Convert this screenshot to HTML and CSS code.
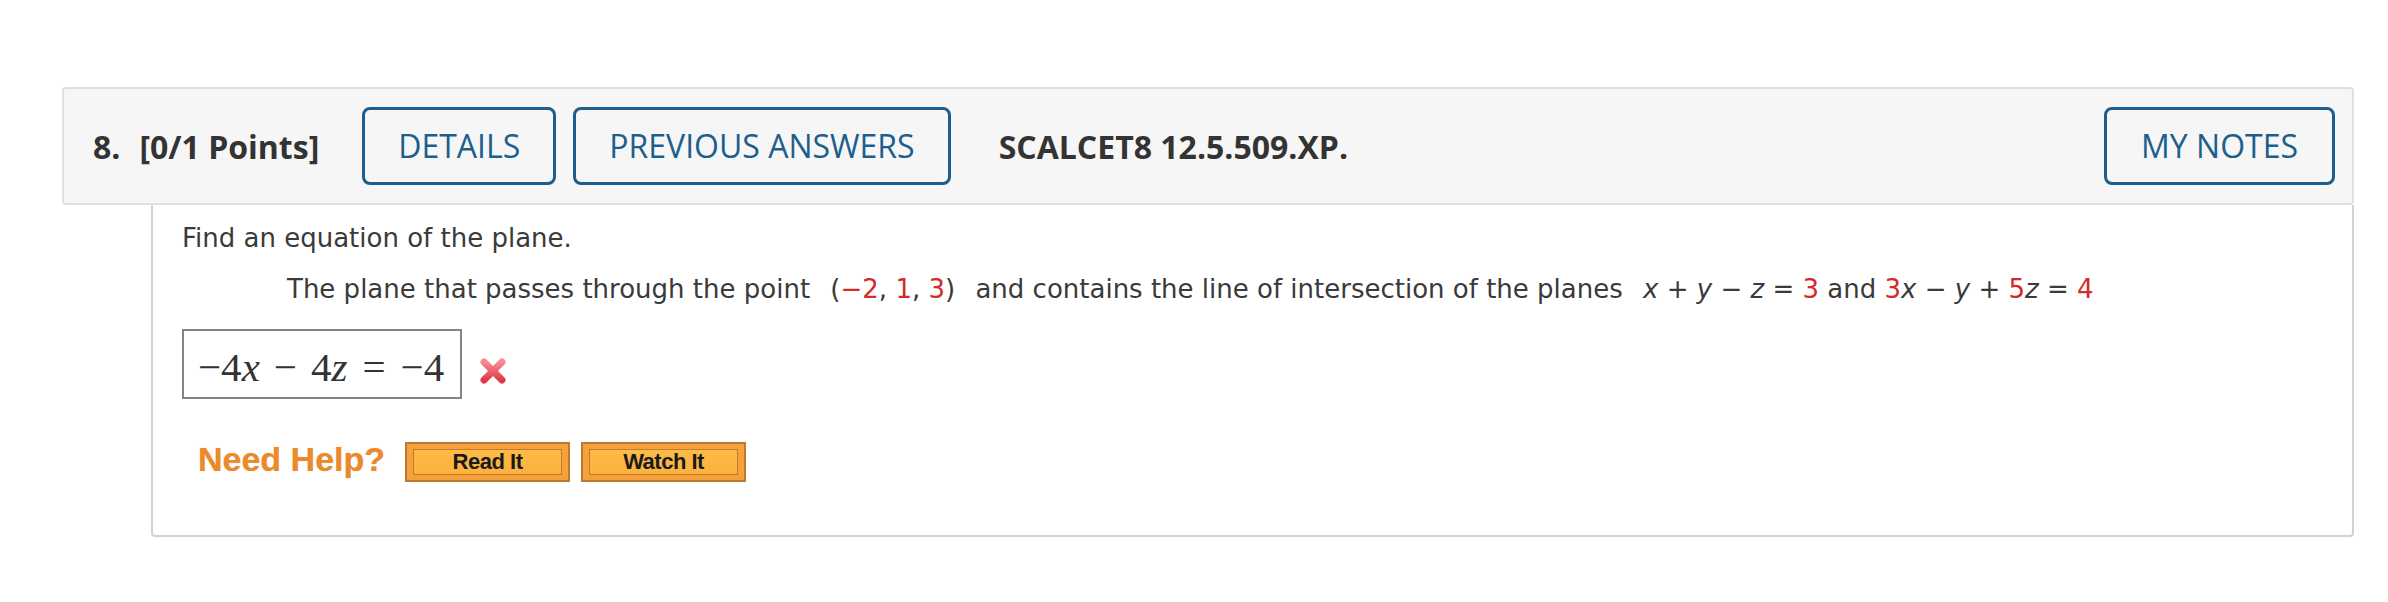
FILE: index.html
```html
<!DOCTYPE html>
<html lang="en">
<head>
<meta charset="utf-8">
<title>Question 8</title>
<link rel="stylesheet" href="styles.css">
</head>
<body>
<div class="question">
  <div class="q-header">
    <span class="q-num">8.</span>
    <span class="q-points">[0/1 Points]</span>
    <button class="q-btn details">DETAILS</button>
    <button class="q-btn">PREVIOUS ANSWERS</button>
    <span class="q-code">SCALCET8 12.5.509.XP.</span>
    <button class="q-btn notes">MY NOTES</button>
  </div>
  <div class="q-body">
    <p class="prompt">Find an equation of the plane.</p>
    <p class="statement">The plane that passes through the point <span class="gap"></span>(<span class="red">−2</span>, <span class="red">1</span>, <span class="red">3</span>)<span class="gap"></span> and contains the line of intersection of the planes <span class="gap"></span><i>x</i> + <i>y</i> − <i>z</i> = <span class="red">3</span> and <span class="red">3</span><i>x</i> − <i>y</i> + <span class="red">5</span><i>z</i> = <span class="red">4</span></p>
    <div class="answer-row">
      <div class="answer-box">
        <span class="m">−4<i>x</i></span><span class="op">−</span><span class="m">4<i>z</i></span><span class="rel">=</span><span class="m">−4</span>
      </div>
      <svg class="wrong" width="30" height="28" viewBox="0 0 30 28" aria-label="incorrect">
        <defs>
          <linearGradient id="xg" x1="0" y1="0" x2="0" y2="1">
            <stop offset="0" stop-color="#f58c92"/>
            <stop offset="1" stop-color="#e03a45"/>
          </linearGradient>
        </defs>
        <path d="M6 5 L24 23 M24 5 L6 23" stroke="url(#xg)" stroke-width="7" stroke-linecap="round" fill="none"/>
      </svg>
    </div>
    <div class="help-row">
      <span class="need-help">Need Help?</span>
      <button class="help-btn"><span>Read It</span></button>
      <button class="help-btn"><span>Watch It</span></button>
    </div>
  </div>
</div>
</body>
</html>
```
FILE: styles.css
```css
* { box-sizing: border-box; }
html, body { margin: 0; padding: 0; background: #ffffff; }
body { padding: 87px 0 0 62px; }

.question { width: 2292px; }

.q-header {
  display: flex;
  align-items: center;
  height: 118px;
  background: #f6f6f6;
  border: 2px solid #e0e0e0;
  border-radius: 4px;
  padding: 0 17px 0 29px;
  font-family: "Open Sans", "Liberation Sans", sans-serif;
  font-size: 32px;
  color: #333333;
}
.q-num { font-weight: 700; margin-right: 19px; }
.q-points { font-weight: 700; margin-right: 43px; }
.q-code { font-weight: 700; margin-left: 31px; }

.q-btn {
  height: 78px;
  padding: 0 33px;
  margin-right: 17px;
  border: 3px solid #1c5f8d;
  border-radius: 8px;
  background: #f6f6f6;
  color: #1c5f8d;
  font-family: "Open Sans", "Liberation Sans", sans-serif;
  font-size: 32px;
  font-weight: 400;
  line-height: 1;
}
.q-btn.notes { margin-left: auto; margin-right: 0; padding: 0 34px; }

.q-body {
  margin-left: 89px;
  height: 332px;
  border: 2px solid #d2d2d2;
  border-top: none;
  border-radius: 0 0 4px 4px;
  padding: 18px 0 0 29px;
  font-family: "DejaVu Sans", Verdana, sans-serif;
  font-size: 26px;
  line-height: 30px;
  color: #3a3a3a;
}
.prompt { margin: 0; }
.statement { margin: 21px 0 0 105px; white-space: nowrap; }
.statement i { font-style: italic; }
.gap { display: inline-block; width: 12px; }
.red { color: #d42a2a; }

.answer-row {
  display: flex;
  align-items: center;
  margin-top: 25px;
}
.answer-box {
  width: 280px;
  height: 70px;
  border: 2px solid #858585;
  display: flex;
  align-items: center;
  padding: 6px 0 0 14px;
  font-family: "Liberation Serif", "DejaVu Serif", serif;
  font-size: 41px;
  color: #333333;
  line-height: 1;
}
.answer-box i { font-style: italic; }
.answer-box .op { margin: 0 14px; }
.answer-box .rel { margin: 0 15px; }
.wrong { margin-left: 16px; margin-top: 14px; }

.help-row {
  display: flex;
  align-items: center;
  margin-top: 43px;
  padding-left: 16px;
}
.need-help {
  font-family: "Liberation Sans", Arial, sans-serif;
  font-weight: 700;
  font-size: 34px;
  color: #ea8a2c;
  text-shadow: 0 0 1px rgba(234, 138, 44, 0.6);
  margin-right: 20px;
  margin-top: -6px;
}
.help-btn {
  width: 165px;
  height: 40px;
  padding: 5px 6px;
  margin-right: 11px;
  border: 2px solid #bd7a34;
  background: #f5a23c;
  display: flex;
}
.help-btn span {
  flex: 1;
  display: flex;
  align-items: center;
  justify-content: center;
  border: 1px solid #c27a2b;
  background: linear-gradient(#fdbb47, #fcb13e);
  font-family: "Liberation Sans", Arial, sans-serif;
  font-weight: 700;
  font-size: 22px;
  letter-spacing: -0.5px;
  color: #1a1a1a;
}
```
